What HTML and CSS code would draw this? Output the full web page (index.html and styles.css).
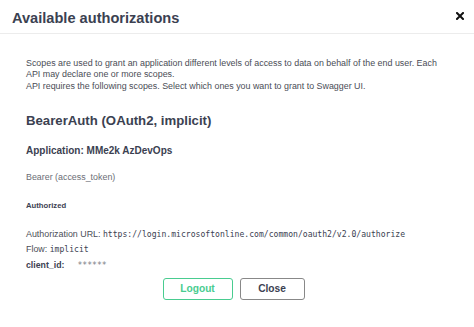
FILE: index.html
```html
<!DOCTYPE html>
<html>
<head>
<meta charset="utf-8">
<link rel="stylesheet" href="styles.css">
</head>
<body>
<div class="modal">
  <div class="modal-header">
    <h3 class="modal-title">Available authorizations</h3>
    <button class="close-btn" aria-label="Close">
      <svg width="8" height="8" viewBox="0 0 8 8"><path d="M1 1 L7 7 M7 1 L1 7" stroke="#111" stroke-width="2" stroke-linecap="square"/></svg>
    </button>
  </div>
  <div class="modal-content">
    <p class="scopes-intro">Scopes are used to grant an application different levels of access to data on behalf of the end user. Each API may declare one or more scopes.</p>
    <p class="scopes-req">API requires the following scopes. Select which ones you want to grant to Swagger UI.</p>
    <h4 class="scheme-title">BearerAuth (OAuth2, implicit)</h4>
    <h5 class="app-title">Application: MMe2k AzDevOps</h5>
    <p class="desc">Bearer (access_token)</p>
    <h6 class="authorized">Authorized</h6>
    <p class="flow-url">Authorization URL: <code>https://login.microsoftonline.com/common/oauth2/v2.0/authorize</code></p>
    <p class="flow">Flow: <code>implicit</code></p>
    <div class="client-row">
      <span class="client-label">client_id:</span>
      <code class="client-value">******</code>
    </div>
    <div class="btn-wrapper">
      <button class="btn btn-logout">Logout</button>
      <button class="btn btn-close">Close</button>
    </div>
  </div>
</div>
</body>
</html>
```
FILE: styles.css
```css
html, body {
  margin: 0;
  padding: 0;
  background: #ffffff;
}
body {
  font-family: "Liberation Sans", Arial, sans-serif;
  color: #3b4151;
}
.modal {
  width: 474px;
}
.modal-header {
  display: flex;
  justify-content: space-between;
  align-items: flex-start;
  padding: 10px 10px 6px 12px;
  border-bottom: 1px solid #ececec;
}
.modal-title {
  margin: 0;
  font-size: 14.6px;
  line-height: 17px;
  font-weight: bold;
  color: #3b4151;
}
.close-btn {
  border: 0;
  background: none;
  padding: 0;
  margin-top: 2px;
  width: 8px;
  height: 8px;
  display: flex;
}
.modal-content {
  padding: 24px 14px 20px 26px;
}
p {
  margin: 0;
  font-size: 8.9px;
  line-height: 11px;
  color: #4a4d56;
}
.scopes-intro {
  margin-bottom: 1px;
  max-width: 412px;
}
.scheme-title {
  margin: 21px 0 0;
  font-size: 13.2px;
  line-height: 16px;
  font-weight: bold;
  color: #3b4151;
}
.app-title {
  margin: 16px 0 0;
  font-size: 10px;
  line-height: 12px;
  font-weight: bold;
  color: #3b4151;
}
.desc {
  margin-top: 15px;
  color: #6b6e76;
}
.authorized {
  margin: 18px 0 0;
  font-size: 7.7px;
  line-height: 10px;
  font-weight: bold;
  color: #3b4151;
}
.flow-url {
  margin-top: 18px;
}
.flow {
  margin-top: 4px;
}
code {
  font-family: "DejaVu Sans Mono", monospace;
  font-size: 8.1px;
  color: #3b4151;
}
.client-row {
  display: flex;
  align-items: baseline;
  gap: 13px;
  margin-top: 5px;
  line-height: 11px;
}
.client-label {
  font-size: 8.76px;
  font-weight: bold;
  color: #3b4151;
}
.client-value {
  color: #7a7d85;
}
.btn-wrapper {
  display: flex;
  justify-content: center;
  gap: 7px;
  margin-top: 7px;
  padding-right: 19px;
}
.btn {
  font-family: "Liberation Sans", Arial, sans-serif;
  font-size: 10.2px;
  font-weight: bold;
  line-height: 12px;
  padding: 4px 16px;
  border-radius: 3px;
  background: #ffffff;
  border: 1.5px solid #888888;
  color: #3b4151;
}
.btn-logout {
  border-color: #49cc90;
  color: #49cc90;
  width: 70px;
}
.btn-close {
  width: 65px;
}
```
